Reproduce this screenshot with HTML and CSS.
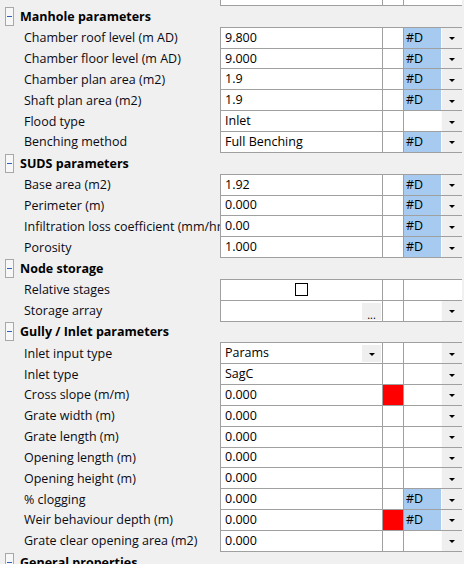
FILE: index.html
```html
<!DOCTYPE html>
<html>
<head>
<meta charset="utf-8">
<link rel="stylesheet" href="styles.css">
</head>
<body>
<div class="grid">
  <div class="row partial">
    <div class="label"></div>
    <div class="cells"><div class="val"></div><div class="sw"></div><div class="flag wide"></div></div>
  </div>

  <div class="hdr"><span class="toggle"></span><span class="title">Manhole parameters</span></div>
  <div class="topline"></div>
  <div class="row"><div class="label">Chamber roof level (m AD)</div><div class="cells"><div class="val">9.800</div><div class="sw"></div><div class="flag blue">#D</div><div class="btn"><span class="arrow"></span></div></div></div>
  <div class="row"><div class="label">Chamber floor level (m AD)</div><div class="cells"><div class="val">9.000</div><div class="sw"></div><div class="flag blue">#D</div><div class="btn"><span class="arrow"></span></div></div></div>
  <div class="row"><div class="label">Chamber plan area (m2)</div><div class="cells"><div class="val">1.9</div><div class="sw"></div><div class="flag blue">#D</div><div class="btn"><span class="arrow"></span></div></div></div>
  <div class="row"><div class="label">Shaft plan area (m2)</div><div class="cells"><div class="val">1.9</div><div class="sw"></div><div class="flag blue">#D</div><div class="btn"><span class="arrow"></span></div></div></div>
  <div class="row"><div class="label">Flood type</div><div class="cells"><div class="val">Inlet</div><div class="sw"></div><div class="flag"></div><div class="btn"><span class="arrow"></span></div></div></div>
  <div class="row"><div class="label">Benching method</div><div class="cells"><div class="val">Full Benching</div><div class="sw"></div><div class="flag blue">#D</div><div class="btn"><span class="arrow"></span></div></div></div>

  <div class="hdr"><span class="toggle"></span><span class="title">SUDS parameters</span></div>
  <div class="topline"></div>
  <div class="row"><div class="label">Base area (m2)</div><div class="cells"><div class="val">1.92</div><div class="sw"></div><div class="flag blue">#D</div><div class="btn"><span class="arrow"></span></div></div></div>
  <div class="row"><div class="label">Perimeter (m)</div><div class="cells"><div class="val">0.000</div><div class="sw"></div><div class="flag blue">#D</div><div class="btn"><span class="arrow"></span></div></div></div>
  <div class="row"><div class="label">Infiltration loss coefficient (mm/hr)</div><div class="cells"><div class="val">0.00</div><div class="sw"></div><div class="flag blue">#D</div><div class="btn"><span class="arrow"></span></div></div></div>
  <div class="row"><div class="label">Porosity</div><div class="cells"><div class="val">1.000</div><div class="sw"></div><div class="flag blue">#D</div><div class="btn"><span class="arrow"></span></div></div></div>

  <div class="hdr"><span class="toggle"></span><span class="title">Node storage</span></div>
  <div class="topline"></div>
  <div class="row"><div class="label">Relative stages</div><div class="cells"><div class="val center"><span class="check"></span></div><div class="sw"></div><div class="flag wide"></div></div></div>
  <div class="row"><div class="label">Storage array</div><div class="cells"><div class="val"><span class="vtext"></span><span class="ibtn dots">...</span></div><div class="sw"></div><div class="flag"></div><div class="btn"><span class="arrow"></span></div></div></div>

  <div class="hdr"><span class="toggle"></span><span class="title">Gully / Inlet parameters</span></div>
  <div class="topline"></div>
  <div class="row"><div class="label">Inlet input type</div><div class="cells"><div class="val"><span class="vtext">Params</span><span class="ibtn"><span class="arrow"></span></span></div><div class="sw"></div><div class="flag"></div><div class="btn"><span class="arrow"></span></div></div></div>
  <div class="row"><div class="label">Inlet type</div><div class="cells"><div class="val">SagC</div><div class="sw"></div><div class="flag"></div><div class="btn"><span class="arrow"></span></div></div></div>
  <div class="row"><div class="label">Cross slope (m/m)</div><div class="cells"><div class="val">0.000</div><div class="sw red"></div><div class="flag"></div><div class="btn"><span class="arrow"></span></div></div></div>
  <div class="row"><div class="label">Grate width (m)</div><div class="cells"><div class="val">0.000</div><div class="sw"></div><div class="flag"></div><div class="btn"><span class="arrow"></span></div></div></div>
  <div class="row"><div class="label">Grate length (m)</div><div class="cells"><div class="val">0.000</div><div class="sw"></div><div class="flag"></div><div class="btn"><span class="arrow"></span></div></div></div>
  <div class="row"><div class="label">Opening length (m)</div><div class="cells"><div class="val">0.000</div><div class="sw"></div><div class="flag"></div><div class="btn"><span class="arrow"></span></div></div></div>
  <div class="row"><div class="label">Opening height (m)</div><div class="cells"><div class="val">0.000</div><div class="sw"></div><div class="flag"></div><div class="btn"><span class="arrow"></span></div></div></div>
  <div class="row"><div class="label">% clogging</div><div class="cells"><div class="val">0.000</div><div class="sw"></div><div class="flag blue">#D</div><div class="btn"><span class="arrow"></span></div></div></div>
  <div class="row"><div class="label">Weir behaviour depth (m)</div><div class="cells"><div class="val">0.000</div><div class="sw red"></div><div class="flag blue">#D</div><div class="btn"><span class="arrow"></span></div></div></div>
  <div class="row"><div class="label">Grate clear opening area (m2)</div><div class="cells"><div class="val">0.000</div><div class="sw"></div><div class="flag"></div><div class="btn"><span class="arrow"></span></div></div></div>

  <div class="hdr"><span class="toggle"></span><span class="title">General properties</span></div>
</div>
</body>
</html>
```

FILE: styles.css
```css
html, body {
  margin: 0;
  padding: 0;
}
body {
  width: 464px;
  height: 564px;
  overflow: hidden;
  background: #f0f0f0;
  font-family: "Open Sans", "Noto Sans", sans-serif;
  font-size: 12.5px;
  color: #000;
}
.grid {
  display: flex;
  flex-direction: column;
}
.row {
  display: flex;
  height: 20.85px;
  flex: none;
}
.row.partial {
  height: 6px;
}
.label {
  width: 220px;
  flex: none;
  box-sizing: border-box;
  padding-left: 24px;
  padding-bottom: 1px;
  white-space: nowrap;
  overflow: hidden;
  display: flex;
  align-items: center;
  color: #0a0a14;
}
.cells {
  display: flex;
  width: 242px;
  flex: none;
  box-sizing: border-box;
  border-left: 1px solid #a0a0a0;
  border-bottom: 1px solid #a0a0a0;
}
.val {
  width: 157px;
  flex: none;
  background: #fff;
  border-right: 1px solid #a0a0a0;
  padding-left: 4px;
  padding-bottom: 1px;
  box-sizing: content-box;
  display: flex;
  align-items: center;
  white-space: nowrap;
  overflow: hidden;
}
.val.center {
  justify-content: center;
  padding-left: 0;
  padding-bottom: 0;
  width: 161px;
}
.vtext {
  flex: 1;
}
.sw {
  width: 20px;
  flex: none;
  background: #fff;
  border-right: 1px solid #a0a0a0;
}
.sw.red {
  background: #ff0000;
}
.flag {
  width: 35px;
  flex: none;
  padding-left: 2px;
  padding-bottom: 1px;
  background: #fff;
  display: flex;
  align-items: center;
}
.flag.wide {
  width: 56px;
}
.flag.blue {
  background: #a6caf0;
}
.btn {
  width: 21px;
  flex: none;
  background: #efefef;
  box-sizing: border-box;
  border-left: 1px solid #fbfbfb;
  display: flex;
  align-items: center;
  justify-content: center;
  padding-top: 2px;
}
.ibtn {
  width: 19px;
  align-self: stretch;
  margin: 2px 1px 0 0;
  background: #efefef;
  display: flex;
  align-items: center;
  justify-content: center;
  padding-top: 2px;
  box-sizing: border-box;
}
.ibtn.dots {
  align-items: flex-end;
  font-size: 11px;
  line-height: 11px;
  letter-spacing: 0;
  padding-bottom: 0;
}
.arrow {
  width: 0;
  height: 0;
  border-left: 3px solid transparent;
  border-right: 3px solid transparent;
  border-top: 3px solid #000;
}
.check {
  width: 13px;
  height: 13px;
  box-sizing: border-box;
  border: 1px solid #000;
  background: #fff;
}
.topline {
  margin-left: 220px;
  width: 242px;
  height: 1px;
  background: #a0a0a0;
  flex: none;
}
.hdr {
  height: 20.8px;
  flex: none;
  display: flex;
  align-items: center;
  padding-left: 5px;
}
.toggle {
  width: 9px;
  height: 19px;
  box-sizing: border-box;
  border: 1px solid #a8a8a8;
  background: #f7f7f7;
  margin-right: 6px;
  display: flex;
  align-items: center;
  justify-content: center;
}
.toggle::after {
  content: "";
  width: 5px;
  height: 1px;
  background: #2f5fb8;
}
.title {
  font-weight: bold;
  color: #000;
}
```
